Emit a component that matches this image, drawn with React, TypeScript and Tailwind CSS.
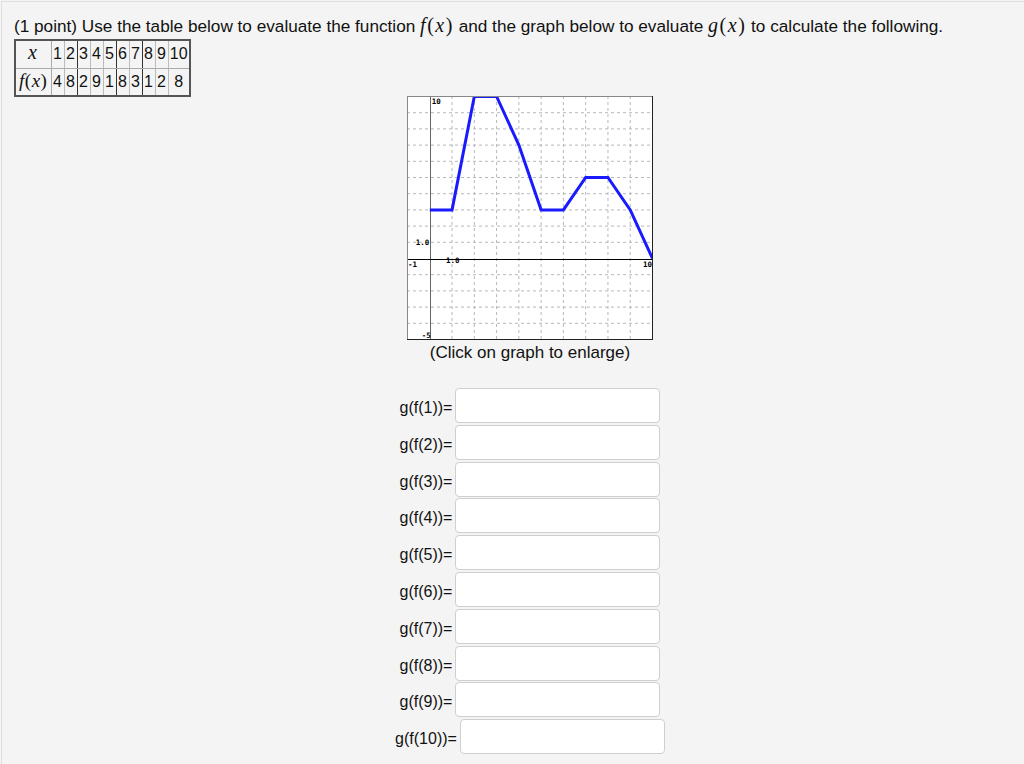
import React from "react";

const W = 246;
const H = 244;
const X = (x: number) => 0.5 + (x + 1) * (245 / 11);
const Y = (y: number) => 0.5 + (10 - y) * (243 / 15);

const pts: [number, number][] = [
  [0, 3], [1, 3], [2, 10], [3, 10], [4, 7], [5, 3], [6, 3], [7, 5], [8, 5], [9, 3], [10, 0],
];

function Graph() {
  const vx: number[] = [];
  for (let i = 1; i <= 9; i++) vx.push(i);
  const hy: number[] = [];
  for (let j = -4; j <= 9; j++) if (j !== 0) hy.push(j);
  return (
    <svg width={W} height={H} viewBox={`0 0 ${W} ${H}`} className="block bg-white">
      {vx.map((i) => (
        <line key={"v" + i} x1={X(i)} y1={0} x2={X(i)} y2={H} stroke="#b8b8b8" strokeWidth={1} strokeDasharray="3 3" />
      ))}
      {hy.map((j) => (
        <line key={"h" + j} x1={0} y1={Y(j)} x2={W} y2={Y(j)} stroke="#b8b8b8" strokeWidth={1} strokeDasharray="3 3" />
      ))}
      <line x1={Math.round(X(0)) + 0.5} y1={0} x2={Math.round(X(0)) + 0.5} y2={H} stroke="#666" strokeWidth={1} />
      <line x1={0} y1={Math.round(Y(0)) + 0.5} x2={W} y2={Math.round(Y(0)) + 0.5} stroke="#000" strokeWidth={1} />
      <polyline
        points={pts.map(([x, y]) => `${X(x)},${Y(y)}`).join(" ")}
        fill="none"
        stroke="#1a1aff"
        strokeWidth={3}
        strokeLinejoin="miter"
      />
      <rect x={0.5} y={0.5} width={W - 1} height={H - 1} fill="none" stroke="#888" strokeWidth={1} />
      <line x1={W - 0.5} y1={0} x2={W - 0.5} y2={H} stroke="#222" strokeWidth={1} />
      <line x1={0} y1={H - 0.5} x2={W} y2={H - 0.5} stroke="#222" strokeWidth={1} />
      <g fontFamily="'DejaVu Sans Mono', monospace" fontSize={7.5} fontWeight="bold" fill="#000">
        <text x={X(0) + 2} y={8}>10</text>
        <text x={X(0) - 14} y={Y(1) + 3}>1.0</text>
        <text x={X(1) - 6} y={Y(0) + 4}>1.0</text>
        <text x={1} y={Y(0) + 8}>-1</text>
        <text x={W - 10} y={Y(0) + 8}>10</text>
        <text x={X(0) - 8} y={H - 2}>-5</text>
      </g>
    </svg>
  );
}

const M = ({ children }: { children: React.ReactNode }) => (
  <span className="font-['Liberation_Serif',serif] text-[20px] leading-[20px] tracking-[1.5px]">{children}</span>
);
const I = ({ children }: { children: React.ReactNode }) => <i>{children}</i>;

export default function App() {
  const xs = ["1", "2", "3", "4", "5", "6", "7", "8", "9", "10"];
  const fs = ["4", "8", "2", "9", "1", "8", "3", "1", "2", "8"];
  const dark = [false, false, true, false, false, true, false, true, false, false];
  const labels = ["1", "2", "3", "4", "5", "6", "7", "8", "9", "10"];
  return (
    <div className="w-[1024px] h-[764px] overflow-hidden bg-[#f4f4f4] font-['Liberation_Sans',Arial,sans-serif] text-[15px] text-[#111]">
      <div className="mt-[1px] ml-[1px] h-[763px] border-t border-l border-[#dedede]">
        <div className="pl-[12px] pt-[12px] leading-[24px] text-[17.2px] whitespace-nowrap">
          (1 point) Use the table below to evaluate the function <M><I>f</I>(<I>x</I>)</M> and the graph below to evaluate{" "}
          <M><I>g</I>(<I>x</I>)</M> to calculate the following.
        </div>
        <div className="pl-[12px] pt-[1px]">
          <table className="border-collapse border-2 border-[#555] text-[16px]">
            <tbody>
              <tr className="h-[28px]">
                <td className="w-[36px] border border-[#aaa] text-center p-0">
                  <M><I>x</I></M>
                </td>
                {xs.map((v, i) => (
                  <td
                    key={i}
                    className={
                      (i === 9 ? "w-[22px] " : "w-[13px] ") +
                      "border-y border-[#aaa] p-0 text-center " +
                      (dark[i] ? "border-l border-l-[#333]" : "border-l border-l-[#bbb]")
                    }
                  >
                    {v}
                  </td>
                ))}
              </tr>
              <tr className="h-[28px]">
                <td className="border border-[#aaa] text-center p-0 whitespace-nowrap">
                  <span className="font-['Liberation_Serif',serif] text-[19px] leading-[20px] tracking-[0.5px]">
                    <I>f</I>(<I>x</I>)
                  </span>
                </td>
                {fs.map((v, i) => (
                  <td
                    key={i}
                    className={
                      "border-y border-[#aaa] p-0 text-center " +
                      (dark[i] ? "border-l border-l-[#333]" : "border-l border-l-[#bbb]")
                    }
                  >
                    {v}
                  </td>
                ))}
              </tr>
            </tbody>
          </table>
        </div>
        <div className="pl-[34px] flex flex-col items-center">
          <div className="-mt-[1px]">
            <Graph />
          </div>
          <div className="mt-[3px] leading-[20px] text-[17px]">(Click on graph to enlarge)</div>
          <div className="mt-[25px] flex flex-col items-center gap-[1.8px]">
            {labels.map((n) => (
              <div key={n} className="flex items-center gap-[3px]">
                <span className="pt-[5px] text-[16px]">g(f({n}))=</span>
                <div className="w-[205px] h-[35px] bg-white border border-[#cfcfcf] rounded-[4px]" />
              </div>
            ))}
          </div>
        </div>
      </div>
    </div>
  );
}
